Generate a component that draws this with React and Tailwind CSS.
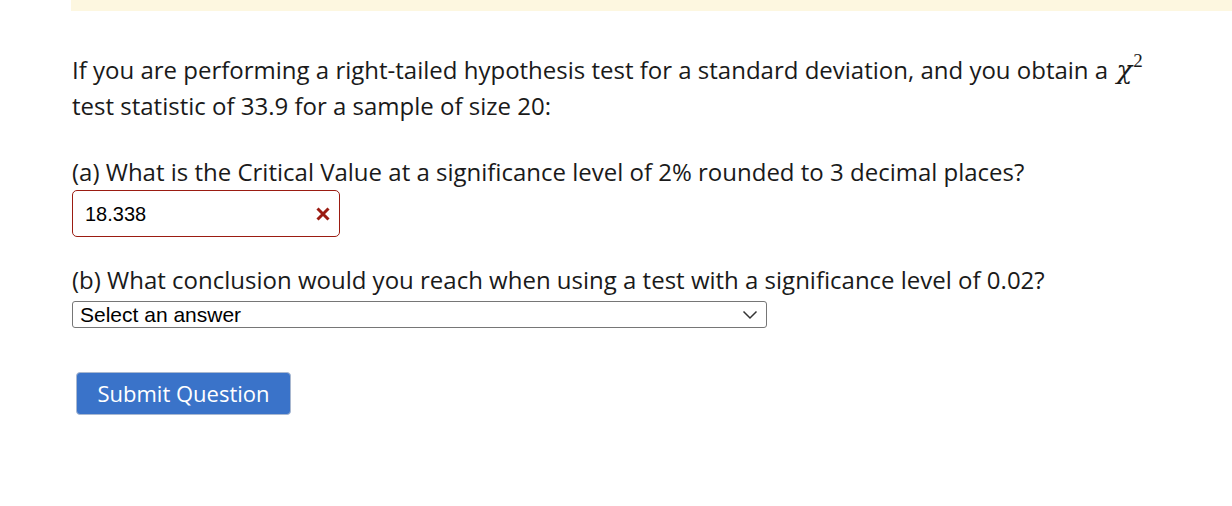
export default function App() {
  return (
    <div className="min-h-[506px] w-[1232px] bg-white font-['Open_Sans',sans-serif] text-[#1a1a1a]">
      <div className="ml-[71px] h-[11px] bg-[#fdf7e0]" />
      <div className="pl-[72px] pt-[41px]">
        <p className="text-[24px] leading-[36px]">
          If you are performing a right-tailed hypothesis test for a standard deviation, and you obtain a{" "}
          <span className="ml-[2px] font-['DejaVu_Serif',serif] text-[26px] italic leading-none">χ</span>
          <span className="relative -top-[12px] ml-[1px] font-['Liberation_Serif',serif] text-[19px] leading-none">2</span>
          <br />
          test statistic of 33.9 for a sample of size 20:
        </p>

        <p className="mt-[30px] text-[24px] leading-[36px]">
          (a) What is the Critical Value at a significance level of 2% rounded to 3 decimal places?
        </p>
        <div className="flex h-[47px] w-[268px] items-center justify-between rounded-[5px] border border-[#9b1c12] px-[12px] font-['Liberation_Sans',sans-serif] text-[20px] text-black">
          <span>18.338</span>
          <svg width="16" height="16" viewBox="0 0 16 16" className="mr-[-4px]">
            <path d="M2.5 2.5 L13.5 13.5 M13.5 2.5 L2.5 13.5" stroke="#9b1c12" strokeWidth="3" />
          </svg>
        </div>

        <p className="mt-[25px] text-[24px] leading-[36px]">
          (b) What conclusion would you reach when using a test with a significance level of 0.02?
        </p>
        <div className="mt-[3px] flex h-[27px] w-[695px] items-center justify-between rounded-[3px] border border-[#767676] pl-[7px] pr-[8px] font-['Liberation_Sans',sans-serif] text-[21px] text-black">
          <span>Select an answer</span>
          <svg width="16" height="10" viewBox="0 0 16 10">
            <path d="M1.5 1.5 L8 8 L14.5 1.5" fill="none" stroke="#333" strokeWidth="1.5" />
          </svg>
        </div>

        <button className="ml-[4px] mt-[44px] h-[43px] w-[215px] rounded-[4px] border border-[#a9b8d0] bg-[#3a73c9] text-[22px] text-white">
          Submit Question
        </button>
      </div>
    </div>
  );
}
